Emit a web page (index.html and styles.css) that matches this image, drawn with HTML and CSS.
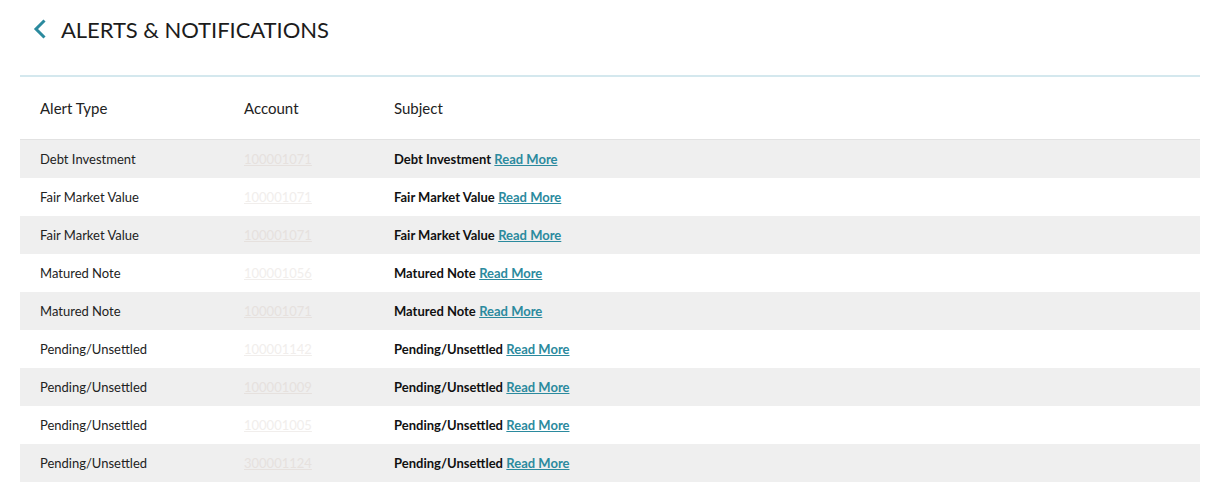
FILE: index.html
```html
<!DOCTYPE html>
<html lang="en">
<head>
    <meta charset="UTF-8">
    <title>Alerts &amp; Notifications</title>
    <link rel="stylesheet" href="styles.css">
</head>
<body>

<div class="page">
    <div class="page-header">
        <a class="back" href="#">
            <svg width="14" height="20" viewBox="0 0 14 20">
                <path d="M11.5 1.5 L3 10 L11.5 18.5" fill="none" stroke="#2b8a9e" stroke-width="3"/>
            </svg>
        </a>
        <h1>ALERTS &amp; NOTIFICATIONS</h1>
    </div>

    <table class="alerts">
        <thead>
            <tr>
                <th class="col-type">Alert Type</th>
                <th class="col-account">Account</th>
                <th>Subject</th>
            </tr>
        </thead>
        <tbody>
            <tr>
                <td>Debt Investment</td>
                <td><a class="acct" href="#">100001071</a></td>
                <td><b>Debt Investment</b> <a class="more" href="#">Read More</a></td>
            </tr>
            <tr>
                <td>Fair Market Value</td>
                <td><a class="acct" href="#">100001071</a></td>
                <td><b>Fair Market Value</b> <a class="more" href="#">Read More</a></td>
            </tr>
            <tr>
                <td>Fair Market Value</td>
                <td><a class="acct" href="#">100001071</a></td>
                <td><b>Fair Market Value</b> <a class="more" href="#">Read More</a></td>
            </tr>
            <tr>
                <td>Matured Note</td>
                <td><a class="acct" href="#">100001056</a></td>
                <td><b>Matured Note</b> <a class="more" href="#">Read More</a></td>
            </tr>
            <tr>
                <td>Matured Note</td>
                <td><a class="acct" href="#">100001071</a></td>
                <td><b>Matured Note</b> <a class="more" href="#">Read More</a></td>
            </tr>
            <tr>
                <td>Pending/Unsettled</td>
                <td><a class="acct" href="#">100001142</a></td>
                <td><b>Pending/Unsettled</b> <a class="more" href="#">Read More</a></td>
            </tr>
            <tr>
                <td>Pending/Unsettled</td>
                <td><a class="acct" href="#">100001009</a></td>
                <td><b>Pending/Unsettled</b> <a class="more" href="#">Read More</a></td>
            </tr>
            <tr>
                <td>Pending/Unsettled</td>
                <td><a class="acct" href="#">100001005</a></td>
                <td><b>Pending/Unsettled</b> <a class="more" href="#">Read More</a></td>
            </tr>
            <tr>
                <td>Pending/Unsettled</td>
                <td><a class="acct" href="#">300001124</a></td>
                <td><b>Pending/Unsettled</b> <a class="more" href="#">Read More</a></td>
            </tr>
        </tbody>
    </table>
</div>

</body>
</html>
```

FILE: styles.css
```css
body {
    margin: 0;
    font-family: 'Lato', 'Open Sans', sans-serif;
    color: #1a1a1a;
    background-color: #ffffff;
}

.page {
    padding: 0 28px 0 20px;
}

.page-header {
    display: flex;
    align-items: center;
    height: 74px;
    padding-left: 13px;
    padding-bottom: 1px;
    border-bottom: 2px solid #d4e8ee; /* light teal divider */
}

.page-header .back {
    display: flex;
    width: 14px;
    height: 20px;
    margin-top: -16px;
}

.page-header h1 {
    margin: -16px 0 0 14px;
    font-size: 22px;
    font-weight: 400;
    letter-spacing: -0.05px;
    color: #1c1c1c;
}

.alerts {
    width: 100%;
    border-collapse: collapse;
    font-size: 13px;
}

.alerts th {
    text-align: left;
    font-weight: 400;
    font-size: 15px;
    height: 62px;
    padding: 0 0 0 20px;
    border-bottom: 1px solid #e2e2e2;
    color: #222;
}

.alerts .col-type {
    width: 184px;
}

.alerts .col-account {
    width: 130px;
}

.alerts td {
    height: 38px;
    padding: 0 0 0 20px;
    color: #222;
}

.alerts tbody tr:nth-child(odd) {
    background-color: #efefef;
}

.alerts b {
    font-weight: 700;
    color: #111;
}

.alerts .more {
    color: #2b8a9e;
    font-weight: 700;
}

/* account numbers are masked in the capture */
.alerts .acct {
    color: #f1eeec;
    text-decoration: underline;
}

.alerts tbody tr:nth-child(odd) .acct {
    color: #e6e1de;
}
```
